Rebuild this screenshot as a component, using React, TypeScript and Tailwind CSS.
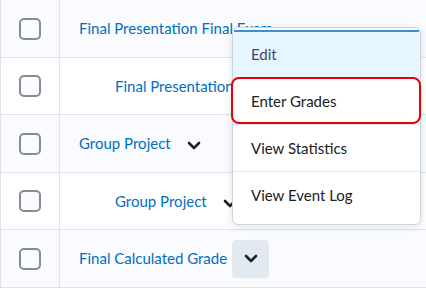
import React from 'react';

interface Row {
  label: string;
  indent: boolean;
  h: string;
  shaded: boolean;
  chevron: 'none' | 'plain' | 'button';
}

const rows: Row[] = [
  { label: 'Final Presentation Final Exam', indent: false, h: 'h-[58px]', shaded: true, chevron: 'none' },
  { label: 'Final Presentation', indent: true, h: 'h-[57px]', shaded: false, chevron: 'none' },
  { label: 'Group Project', indent: false, h: 'h-[58px]', shaded: true, chevron: 'plain' },
  { label: 'Group Project', indent: true, h: 'h-[57px]', shaded: false, chevron: 'plain' },
  { label: 'Final Calculated Grade', indent: false, h: 'h-[58px]', shaded: true, chevron: 'button' },
];

function Chevron() {
  return (
    <svg width="14" height="9" viewBox="0 0 14 9" fill="none">
      <path d="M2 2l5 5 5-5" stroke="#202122" strokeWidth="2.6" strokeLinecap="round" strokeLinejoin="round" />
    </svg>
  );
}

export default function App() {
  return (
    <div className="relative w-[426px] h-[290px] overflow-hidden bg-white" style={{ fontFamily: 'Lato, "Open Sans", sans-serif' }}>
      {/* Grade rows */}
      <div className="flex flex-col border-l border-[#dfe3e8]">
        {rows.map((row, i) => (
          <div
            key={i}
            className={`flex ${row.h} border-b border-[#dfe3e8] ${row.shaded ? 'bg-[#f9fbff]' : 'bg-white'}`}
          >
            <div className="w-[59px] shrink-0 flex items-center justify-center border-r border-[#dfe3e8]">
              <div className="w-[22px] h-[22px] rounded-[5px] border-2 border-[#868c91] bg-[#f9fbff]" />
            </div>
            <div className={`flex items-center ${row.indent ? 'pl-[55px]' : 'pl-[19px]'}`}>
              <span className="text-[15px] text-[#006fbf]">{row.label}</span>
              {row.chevron === 'plain' && (
                <span className="ml-[16px] mt-[4px] flex items-center">
                  <Chevron />
                </span>
              )}
              {row.chevron === 'button' && (
                <span className="ml-[5px] w-[37px] h-[38px] rounded-[4px] bg-[#e3e9f1] flex items-center justify-center">
                  <Chevron />
                </span>
              )}
            </div>
          </div>
        ))}
      </div>

      {/* Context menu */}
      <div className="absolute left-[232px] top-[27px] w-[189px] rounded-[6px] border border-[#cdd5dc] bg-white pt-[2px] pb-[5px] shadow-[0_2px_8px_rgba(0,0,0,0.12)]">
        <div className="h-[2px] bg-[#3d8fd1] mx-[1px]" />
        <div className="h-[46px] flex items-center pl-[18px] bg-[#e6f6ff] border-b border-[#e3e9f1] text-[15px] text-[#3f437f]">
          Edit
        </div>
        <div className="relative h-[47px] flex items-center pl-[18px] border-b border-[#e3e9f1] text-[15px] text-[#202122]">
          Enter Grades
          <span className="absolute -left-[2px] -right-[1px] -top-[1px] bottom-[0px] rounded-[8px] border-2 border-[#e8000b]" />
        </div>
        <div className="h-[47px] flex items-center pl-[18px] border-b border-[#e3e9f1] text-[15px] text-[#202122]">
          View Statistics
        </div>
        <div className="h-[47px] flex items-center pl-[18px] text-[15px] text-[#202122]">
          View Event Log
        </div>
      </div>
    </div>
  );
}
